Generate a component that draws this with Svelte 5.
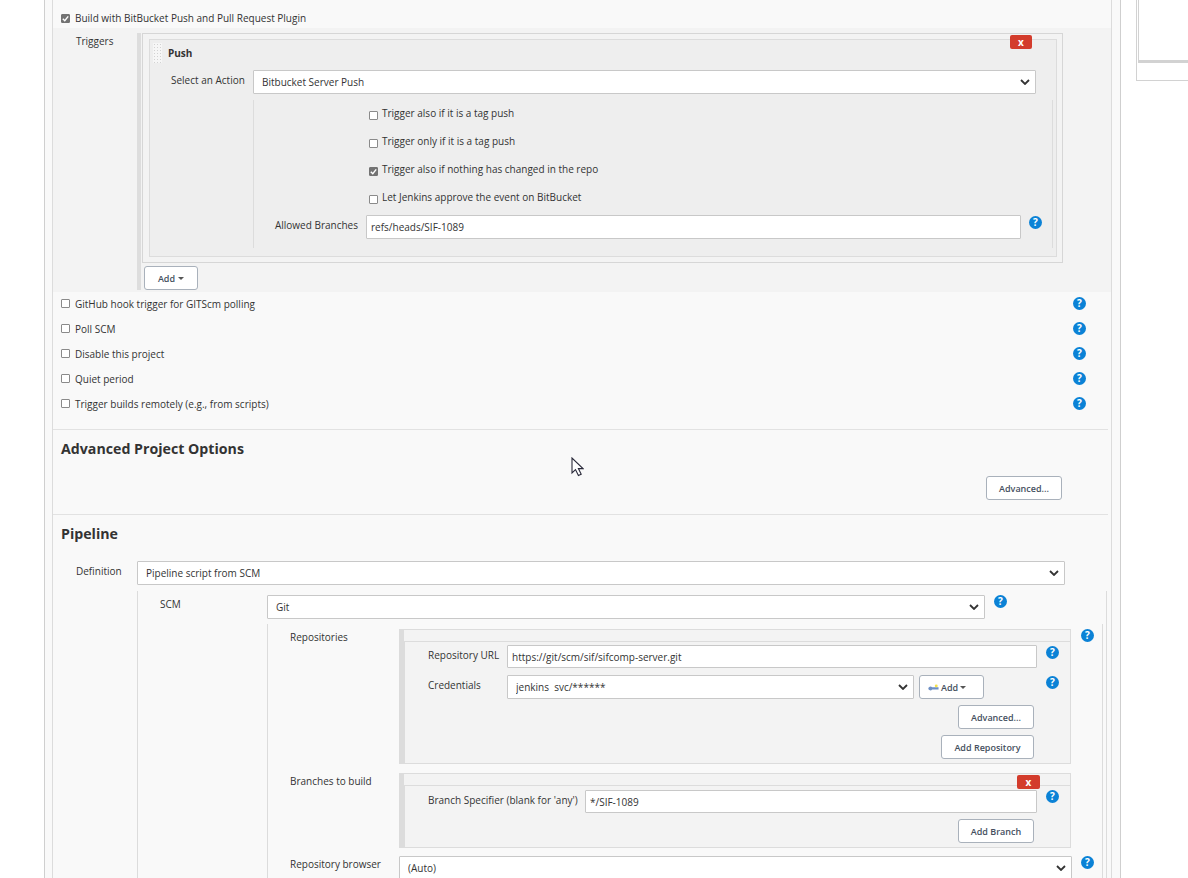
<script>
  const simpleRows = ['GitHub hook trigger for GITScm polling','Poll SCM','Disable this project','Quiet period','Trigger builds remotely (e.g., from scripts)'];
  const pushRows = [
    ['Trigger also if it is a tag push', false],
    ['Trigger only if it is a tag push', false],
    ['Trigger also if nothing has changed in the repo', true],
    ['Let Jenkins approve the event on BitBucket', false]
  ];
</script>

{#snippet help()}
  <span class="help">?</span>
{/snippet}

{#snippet check(on)}
  <span class="cb" class:on>
    {#if on}
      <svg viewBox="0 0 10 10" width="9" height="9"><path d="M2 5.2 4.2 7.4 8 2.6" fill="none" stroke="#fff" stroke-width="1.6"/></svg>
    {/if}
  </span>
{/snippet}

{#snippet pick(value, cls)}
  <div class="pick {cls}">
    <select><option>{value}</option></select>
    <svg class="chev" viewBox="0 0 10 6" width="10" height="6"><path d="M1 1 5 5 9 1" fill="none" stroke="#333" stroke-width="1.8"/></svg>
  </div>
{/snippet}

<div class="root">
  <div class="page">
    <main class="panel">
      <div class="row-top">
        {@render check(true)}
        <span>Build with BitBucket Push and Pull Request Plugin</span>
      </div>

      <section class="triggers">
        <div class="t-label">Triggers</div>
        <div class="t-body">
          <div class="outer">
            <div class="inner">
              <button class="del del-push">x</button>
              <div class="head"><span class="grip"></span><b>Push</b></div>
              <div class="action">
                <label class="a-label" for="act">Select an Action</label>
                <div class="pick w783">
                  <select id="act"><option>Bitbucket Server Push</option></select>
                  <svg class="chev" viewBox="0 0 10 6" width="10" height="6"><path d="M1 1 5 5 9 1" fill="none" stroke="#333" stroke-width="1.8"/></svg>
                </div>
              </div>
              <div class="sub">
                {#each pushRows as [text, on]}
                  <div class="p-row">{@render check(on)}<span class="p-text">{text}</span></div>
                {/each}
                <div class="allowed">
                  <span class="al-label">Allowed Branches</span>
                  <input class="w655" value="refs/heads/SIF-1089" />
                  {@render help()}
                </div>
              </div>
            </div>
          </div>
          <button class="btn add1">Add <i class="caret"></i></button>
        </div>
      </section>

      <div class="rows">
        {#each simpleRows as r}
          <div class="s-row">{@render check(false)}<span class="grow">{r}</span>{@render help()}</div>
        {/each}
      </div>

      <hr class="first" />
      <h2>Advanced Project Options</h2>
      <div class="adv-line"><button class="btn w76">Advanced...</button></div>
      <hr />
      <h2>Pipeline</h2>

      <div class="def">
        <span class="def-label">Definition</span>
        {@render pick('Pipeline script from SCM', 'w928')}
      </div>
      <div class="nest1">
        <div class="scm">
          <span class="scm-label">SCM</span>
          {@render pick('Git', 'w718')}
          {@render help()}
        </div>
        <div class="nest2">
          <div class="g-row repos">
            <span class="g-label">Repositories</span>
            <div class="box h135">
              <div class="box-in">
                <div class="f-row r1">
                  <span class="f-label">Repository URL</span>
                  <input class="w530" value="https://git/scm/sif/sifcomp-server.git" />
                  {@render help()}
                </div>
                <div class="f-row r2">
                  <span class="f-label">Credentials</span>
                  {@render pick('jenkins\u00a0 svc/******', 'w407')}
                  <button class="btn keyadd">
                    <svg viewBox="0 0 12 8" width="11" height="8"><path d="M0.3 4.8a2.4 2.4 0 0 1 4.2-1.5H11.5v2.4H4.5a2.4 2.4 0 0 1-4.2-.9z" fill="#6d8fc4"/><circle cx="9" cy="1.7" r="1.6" fill="#f5e24a"/></svg>
                    Add <i class="caret"></i>
                  </button>
                  <span class="spacer"></span>
                  {@render help()}
                </div>
                <div class="b-row"><button class="btn w76">Advanced...</button></div>
                <div class="b-row"><button class="btn w93">Add Repository</button></div>
              </div>
            </div>
            <span class="box-help">{@render help()}</span>
          </div>

          <div class="g-row branches">
            <span class="g-label">Branches to build</span>
            <div class="box h75">
              <button class="del del-branch">x</button>
              <div class="box-in">
                <div class="f-row r3">
                  <span class="f-label wide">Branch Specifier (blank for 'any')</span>
                  <input class="w452" value="*/SIF-1089" />
                  {@render help()}
                </div>
                <div class="b-row"><button class="btn w76">Add Branch</button></div>
              </div>
            </div>
          </div>

          <div class="g-row browser">
            <span class="g-label">Repository browser</span>
            {@render pick('(Auto)', 'w673')}
            <span class="browser-help">{@render help()}</span>
          </div>
        </div>
      </div>
    </main>
  </div>

  <aside class="side"><div class="side-in"></div></aside>

  <svg class="cursor" viewBox="0 0 13 20" width="13" height="20">
    <path d="M1 1 V16 L4.5 12.6 L7.4 18.6 L10.2 17.2 L7.4 11.6 H12 Z" fill="#fff" stroke="#2a2a3a" stroke-width="1.1"/>
  </svg>
</div>

<style>
  :global(body) { margin: 0; background: #fff; }
  .root {
    position: relative; display: flex; align-items: flex-start; height: 878px; overflow: hidden;
    font: 10px/14px "Open Sans", "Noto Sans", sans-serif; color: #333;
  }
  .page {
    box-sizing: border-box; width: 1077px; height: 878px; margin-left: 44px; padding: 0 8px 0 7px;
    background: #f9f9f9; border: solid #cfcfcf; border-width: 0 1px; flex: none;
  }
  .panel {
    box-sizing: border-box; height: 100%; border: solid #dcdcdc; border-width: 0 1px; padding-top: 10px; overflow: hidden;
  }
  .side { box-sizing: border-box; flex: none; width: 60px; height: 81px; margin-left: 15px; border: 1px solid #d2d2d2; border-top: 0; padding-left: 1px; background: #fff; }
  .side-in { height: 60px; border: solid #d2d2d2; border-width: 0 0 3px 1px; background: #fff; }
  .cursor { position: absolute; left: 571px; top: 457px; }

  .row-top { display: flex; align-items: center; gap: 5px; height: 16px; margin-bottom: 2px; padding-left: 8px; }
  .cb { box-sizing: border-box; flex: none; width: 9px; height: 9px; border: 1px solid #8a8a8a; border-radius: 1px; background: #fff; display: flex; align-items: center; justify-content: center; }
  .cb.on { background: #737373; border-color: #737373; }
  .cb svg { flex: none; }

  .triggers { display: flex; background: #f3f3f3; padding: 5px 0 2px; }
  .t-label { box-sizing: border-box; flex: none; width: 84px; padding: 1px 0 0 23px; }
  .t-body { box-sizing: border-box; border-left: 4px solid #ddd; padding-left: 1px; height: 257px; }
  .outer { box-sizing: border-box; width: 921px; height: 230px; border: 1px solid #d6d6d6; padding: 5px 5px 5px 6px; background: #f3f3f3; }
  .inner { position: relative; box-sizing: border-box; height: 218px; border: 1px solid #dcdcdc; background: #eee; }
  .del { position: absolute; box-sizing: border-box; width: 22px; height: 14px; padding: 0; border: 0; border-radius: 2px; background: #d33c2c; color: #fff; font: bold 10px/13px "Open Sans", sans-serif; }
  .del-push { right: 24px; top: -5px; }
  .head { box-sizing: border-box; display: flex; align-items: flex-start; height: 30px; padding: 3px 0 0 3px; gap: 6px; }
  .head b { color: #333; line-height: 20px; }
  .grip { width: 9px; height: 20px; background-color: #f6f6f6; background-image: radial-gradient(circle, #d2d2d2 0.6px, transparent 0.7px); background-size: 3px 3px; }
  .action { display: flex; }
  .a-label { box-sizing: border-box; width: 103px; padding: 3px 0 0 21px; }
  .pick { position: relative; height: 24px; flex: none; }
  select, input {
    box-sizing: border-box; width: 100%; height: 100%; margin: 0; border: 1px solid #c8c8c8; border-radius: 1px; background: #fff; color: #333;
    font: inherit; outline: 0;
  }
  select { appearance: none; padding: 0 20px 0 8px; }
  input { padding: 0 4px; height: 24px; flex: none; }
  .chev { position: absolute; right: 6px; top: 9px; pointer-events: none; }
  .w783 { width: 783px; } .w928 { width: 928px; } .w718 { width: 718px; } .w407 { width: 407px; } .w673 { width: 673px; }
  input.w655 { width: 655px; } input.w530 { width: 530px; } input.w452 { width: 452px; }

  .sub { box-sizing: border-box; height: 148px; margin: 6px 3px 0 103px; padding-top: 1px; border: solid #dcdcdc; border-width: 0 1px; }
  .p-row { display: flex; align-items: center; gap: 4px; height: 28px; padding-left: 115px; }
  .p-text { margin-top: -4px; }
  .allowed { display: flex; align-items: flex-start; margin-top: 2px; }
  .al-label { box-sizing: border-box; width: 104px; text-align: right; padding-top: 3px; margin-right: 8px; }
  .allowed .help { margin: 1px 0 0 8px; }

  .help { box-sizing: border-box; display: block; flex: none; width: 13px; height: 13px; border-radius: 50%; background: #0b82d6; color: #fff; font: bold 10px/13px "Open Sans", sans-serif; text-align: center; }

  .btn {
    box-sizing: border-box; height: 24px; padding: 1px 0 0; border: 1px solid #a9b1bb; border-radius: 3px; background: #fff; color: #454f5e;
    font: 600 9px/14px "Open Sans", sans-serif; flex: none; display: inline-flex; align-items: center; justify-content: center; gap: 3px;
  }
  .caret { width: 0; height: 0; border: solid transparent; border-width: 3px 3px 0; border-top-color: #555; margin-top: -1px; }
  .add1 { width: 54px; margin: 3px 0 0 2px; }
  .w76 { width: 76px; } .w93 { width: 93px; }

  .rows { margin-top: -1px; }
  .s-row { display: flex; align-items: center; gap: 5px; height: 25px; padding: 0 25px 0 8px; }
  .grow { flex: 1; }

  hr { height: 1px; margin: 0 3px 0 0; border: 0; background: #e2e2e2; }
  hr.first { margin-top: 13px; }
  h2 { margin: 9px 0 0 8px; font: 700 14.2px/20px "Open Sans", sans-serif; color: #333; }
  .adv-line { display: flex; justify-content: flex-end; margin: 17px 49px 14px 0; }

  .def { display: flex; margin-top: 17px; height: 24px; }
  .def-label { box-sizing: border-box; width: 84px; padding: 3px 0 0 23px; }
  .nest1 { box-sizing: border-box; margin: 6px 4px 0 84px; padding-top: 4px; height: 300px; border: solid #dcdcdc; border-width: 0 1px; }
  .scm { display: flex; height: 24px; }
  .scm-label { box-sizing: border-box; width: 129px; padding: 2px 0 0 22px; }
  .scm .help { margin: 0 0 0 9px; }
  .nest2 { box-sizing: border-box; margin: 5px 3px 0 129px; padding-top: 5px; height: 280px; border: solid #dcdcdc; border-width: 0 1px; }
  .g-row { display: flex; position: relative; }
  .g-label { box-sizing: border-box; flex: none; width: 131px; padding: 1px 0 0 22px; }
  .box { position: relative; box-sizing: border-box; flex: none; width: 672px; border: solid #dcdcdc; border-width: 1px 1px 1px 5px; background: #f3f3f3; }
  .h135 { height: 135px; } .h75 { height: 75px; }
  .box-in { box-sizing: border-box; height: calc(100% - 11px); margin-top: 11px; border-left: 1px solid #dcdcdc; border-top: 1px solid #dcdcdc; }
  .box-help { margin: 0 0 0 10px; }
  .f-row { display: flex; align-items: flex-start; padding-left: 23px; }
  .f-label { box-sizing: border-box; flex: none; width: 79px; padding-top: 3px; white-space: nowrap; }
  .f-label.wide { width: 157px; }
  .f-row .help { margin: 1px 0 0 9px; }
  .r1 { padding-top: 3px; }
  .r2 { margin-top: 7px; }
  .r3 { padding-top: 4px; }
  .r3 .help { margin-top: 0; }
  .r1 input, .r3 input { height: 23px; }
  .keyadd { width: 65px; margin-left: 5px; gap: 2px; justify-content: flex-start; padding-left: 8px; }
  .spacer { width: 53px; flex: none; }
  .b-row { display: flex; justify-content: flex-end; padding-right: 36px; margin-top: 6px; }
  .branches { margin-top: 9px; }
  .del-branch { right: 30px; top: 1px; width: 23px; }
  .browser { margin-top: 8px; }
  .browser-help { margin-left: 9px; }
</style>
